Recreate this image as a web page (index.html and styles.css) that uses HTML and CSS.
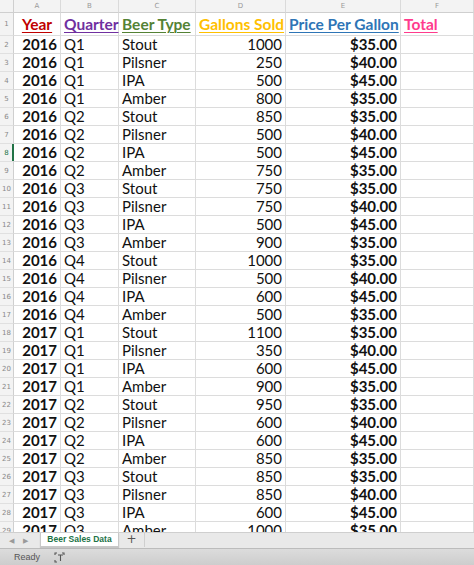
FILE: index.html
```html
<!DOCTYPE html>
<html>
<head>
<meta charset="utf-8">
<link rel="stylesheet" href="styles.css">
</head>
<body>
<div class="app">
  <div class="sheet">
    <div class="grid">
      <div class="corner"></div>
      <div class="colh">A</div><div class="colh">B</div><div class="colh">C</div><div class="colh">D</div><div class="colh">E</div><div class="colh">F</div>

      <div class="rowh r1">1</div>
      <div class="c h1 center"><span class="hd year">Year</span></div>
      <div class="c h1"><span class="hd quarter">Quarter</span></div>
      <div class="c h1"><span class="hd beer">Beer Type</span></div>
      <div class="c h1"><span class="hd gallons">Gallons Sold</span></div>
      <div class="c h1"><span class="hd price">Price Per Gallon</span></div>
      <div class="c h1"><span class="hd total">Total</span></div>
    </div>
    <div class="grid body" id="rows"></div>
  </div>
  <div class="tabbar">
    <span class="nav">&#9664;</span><span class="nav">&#9654;</span>
    <div class="tab">Beer Sales Data</div>
    <div class="plus">+</div>
  </div>
  <div class="status">
    <span class="ready">Ready</span>
    <svg class="sicon" width="11" height="11" viewBox="0 0 11 11"><path d="M1 3V1h2M8 1h2v2M1 8v2h2M4 3h5M6.5 3v6" fill="none" stroke="#555" stroke-width="1.1"/></svg>
  </div>
</div>
<script src="app.js"></script>
</body>
</html>
```
FILE: app.js
```js
const data = [
["2016","Q1","Stout",1000,"$35.00"],["2016","Q1","Pilsner",250,"$40.00"],["2016","Q1","IPA",500,"$45.00"],["2016","Q1","Amber",800,"$35.00"],
["2016","Q2","Stout",850,"$35.00"],["2016","Q2","Pilsner",500,"$40.00"],["2016","Q2","IPA",500,"$45.00"],["2016","Q2","Amber",750,"$35.00"],
["2016","Q3","Stout",750,"$35.00"],["2016","Q3","Pilsner",750,"$40.00"],["2016","Q3","IPA",500,"$45.00"],["2016","Q3","Amber",900,"$35.00"],
["2016","Q4","Stout",1000,"$35.00"],["2016","Q4","Pilsner",500,"$40.00"],["2016","Q4","IPA",600,"$45.00"],["2016","Q4","Amber",500,"$35.00"],
["2017","Q1","Stout",1100,"$35.00"],["2017","Q1","Pilsner",350,"$40.00"],["2017","Q1","IPA",600,"$45.00"],["2017","Q1","Amber",900,"$35.00"],
["2017","Q2","Stout",950,"$35.00"],["2017","Q2","Pilsner",600,"$40.00"],["2017","Q2","IPA",600,"$45.00"],["2017","Q2","Amber",850,"$35.00"],
["2017","Q3","Stout",850,"$35.00"],["2017","Q3","Pilsner",850,"$40.00"],["2017","Q3","IPA",600,"$45.00"],["2017","Q3","Amber",1000,"$35.00"]
];
const rows = document.getElementById('rows');
let html = '';
data.forEach((d, i) => {
  const n = i + 2;
  html += `<div class="rowh${n === 8 ? ' active' : ''}">${n}</div>`;
  html += `<div class="c num b">${d[0]}</div>`;
  html += `<div class="c">${d[1]}</div>`;
  html += `<div class="c">${d[2]}</div>`;
  html += `<div class="c num">${d[3]}</div>`;
  html += `<div class="c num b">${d[4]}</div>`;
  html += `<div class="c"></div>`;
});
rows.innerHTML = html;
```
FILE: styles.css
```css
html, body { margin: 0; padding: 0; }
body { width: 474px; height: 565px; overflow: hidden; background: #fff; font-family: Lato, "Open Sans", sans-serif; }
.app { display: flex; flex-direction: column; height: 565px; }
.sheet { flex: 0 0 532px; overflow: hidden; }
.grid {
  display: grid;
  grid-template-columns: 14px 47px 58px 77px 90px 115px 73px;
}
.grid:not(.body) { grid-template-rows: 13px 23px; }
.grid.body { grid-auto-rows: 18px; }
.corner { background: #f3f3f3; border-right: 1px solid #cfcfcf; border-bottom: 1px solid #cfcfcf; }
.colh {
  background: #f3f3f3; border-right: 1px solid #dadada; border-bottom: 1px solid #cfcfcf;
  font: 7px "DejaVu Sans", sans-serif; color: #999; text-align: center; line-height: 12px;
}
.rowh {
  background: #f3f3f3; border-right: 1px solid #cfcfcf; border-bottom: 1px solid #e0e0e0;
  font: 7px "DejaVu Sans", sans-serif; color: #888; display: flex; align-items: center; justify-content: center;
  box-sizing: border-box; position: relative;
}
.rowh.active { color: #217346; }
.rowh.active::after { content: ""; position: absolute; right: -1px; top: 0; bottom: 0; width: 2px; background: #217346; }
.c {
  border-right: 1px solid #dcdcdc; border-bottom: 1px solid #dcdcdc;
  font-size: 15px; color: #111; display: flex; align-items: flex-end; padding: 0 3px 0 3px;
  line-height: 17px; white-space: nowrap; overflow: visible; box-sizing: border-box;
}
.c.num { justify-content: flex-end; }
.c.b { font-weight: 700; }
.c.center { justify-content: center; }
.h1 { padding-bottom: 1px; }
.hd { font-weight: 700; font-size: 15.5px; text-decoration: underline; text-underline-offset: 2px; text-decoration-thickness: 1px; line-height: 20px; }
.year { color: #c00000; }
.quarter { color: #7030a0; }
.beer { color: #548235; }
.gallons { color: #ffc000; }
.price { color: #2e75b6; }
.total { color: #ff3b8d; }
.tabbar {
  flex: 0 0 15px; background: #e9e9e9; border-top: 1px solid #cfcfcf;
  display: flex; align-items: flex-start; position: relative;
}
.nav { font-size: 7px; color: #9a9a9a; width: 14px; text-align: center; line-height: 14px; }
.nav:first-child { margin-left: 4px; }
.tab {
  margin-left: 8px; width: 77px; height: 13px; background: #fff; border: 1px solid #c8c8c8; border-top: none;
  box-shadow: 0 1px 1px rgba(0,0,0,0.15);
  font: bold 8.5px "Liberation Sans", Arial, sans-serif; color: #217346; text-align: center; line-height: 12px;
}
.plus { width: 25px; text-align: center; font: 12px "DejaVu Sans", sans-serif; color: #555; line-height: 13px; border-right: 1px solid #cfcfcf; height: 14px; }
.status {
  flex: 1; background: linear-gradient(#dcdcdc, #cdcdcd); border-top: 1px solid #bcbcbc;
  display: flex; align-items: center; padding-left: 14px; gap: 14px;
}
.ready { font: 9px "Liberation Sans", Arial, sans-serif; color: #555; }
.sicon { display: block; }
```
